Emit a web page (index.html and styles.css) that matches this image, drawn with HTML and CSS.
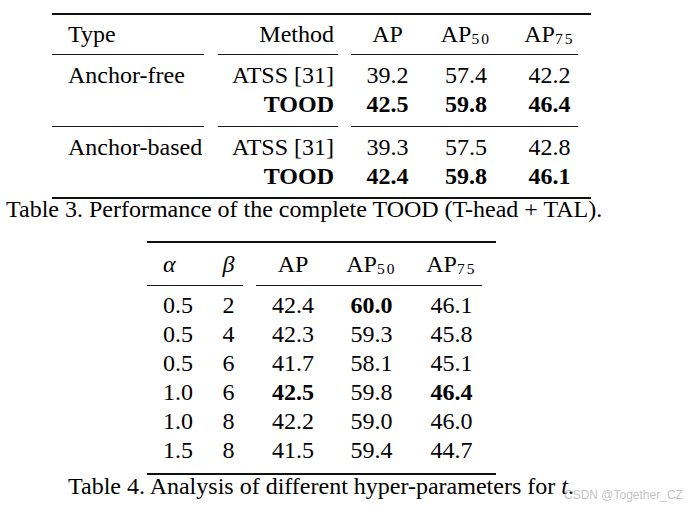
FILE: index.html
```html
<!DOCTYPE html>
<html>
<head>
<meta charset="utf-8">
<link rel="stylesheet" href="styles.css">
</head>
<body>
<div class="page">
  <div class="tbl t3">
    <div class="rule-thick rt-top3"></div>
    <div class="row head">
      <div class="c c-type">Type</div>
      <div class="c c-method">Method</div>
      <div class="c c-num">AP</div>
      <div class="c c-num c-mid">AP<span class="sub">50</span></div>
      <div class="c c-num">AP<span class="sub">75</span></div>
    </div>
    <div class="row rules r-head">
      <span class="seg s3a"></span>
      <span class="seg s3b"></span>
      <span class="seg s3c"></span>
    </div>
    <div class="row">
      <div class="c c-type">Anchor-free</div>
      <div class="c c-method">ATSS [31]</div>
      <div class="c c-num">39.2</div>
      <div class="c c-num c-mid">57.4</div>
      <div class="c c-num">42.2</div>
    </div>
    <div class="row">
      <div class="c c-type"></div>
      <div class="c c-method b">TOOD</div>
      <div class="c c-num b">42.5</div>
      <div class="c c-num c-mid b">59.8</div>
      <div class="c c-num b">46.4</div>
    </div>
    <div class="row rules r-group">
      <span class="seg s3a"></span>
      <span class="seg s3b"></span>
      <span class="seg s3c"></span>
    </div>
    <div class="row">
      <div class="c c-type">Anchor-based</div>
      <div class="c c-method">ATSS [31]</div>
      <div class="c c-num">39.3</div>
      <div class="c c-num c-mid">57.5</div>
      <div class="c c-num">42.8</div>
    </div>
    <div class="row">
      <div class="c c-type"></div>
      <div class="c c-method b">TOOD</div>
      <div class="c c-num b">42.4</div>
      <div class="c c-num c-mid b">59.8</div>
      <div class="c c-num b">46.1</div>
    </div>
    <div class="rule-thick rt-bot3"></div>
  </div>
  <p class="caption cap3">Table 3. Performance of the complete TOOD (T-head + TAL).</p>

  <div class="tbl t4">
    <div class="rule-thick rt-top4"></div>
    <div class="row head">
      <div class="c c-a"><i class="math">α</i></div>
      <div class="c c-b"><i class="math">β</i></div>
      <div class="c c-num">AP</div>
      <div class="c c-num">AP<span class="sub">50</span></div>
      <div class="c c-num">AP<span class="sub">75</span></div>
    </div>
    <div class="row rules r-head4">
      <span class="seg s4a"></span>
      <span class="seg s4b"></span>
    </div>
    <div class="row"><div class="c c-a">0.5</div><div class="c c-b">2</div><div class="c c-num">42.4</div><div class="c c-num b">60.0</div><div class="c c-num">46.1</div></div>
    <div class="row"><div class="c c-a">0.5</div><div class="c c-b">4</div><div class="c c-num">42.3</div><div class="c c-num">59.3</div><div class="c c-num">45.8</div></div>
    <div class="row"><div class="c c-a">0.5</div><div class="c c-b">6</div><div class="c c-num">41.7</div><div class="c c-num">58.1</div><div class="c c-num">45.1</div></div>
    <div class="row"><div class="c c-a">1.0</div><div class="c c-b">6</div><div class="c c-num b">42.5</div><div class="c c-num">59.8</div><div class="c c-num b">46.4</div></div>
    <div class="row"><div class="c c-a">1.0</div><div class="c c-b">8</div><div class="c c-num">42.2</div><div class="c c-num">59.0</div><div class="c c-num">46.0</div></div>
    <div class="row"><div class="c c-a">1.5</div><div class="c c-b">8</div><div class="c c-num">41.5</div><div class="c c-num">59.4</div><div class="c c-num">44.7</div></div>
    <div class="rule-thick rt-bot4"></div>
  </div>
  <p class="caption cap4">Table 4. Analysis of different hyper-parameters for <i>t</i>.</p>
  <div class="watermark">CSDN @Together_CZ</div>
</div>
</body>
</html>
```

FILE: styles.css
```css
html, body {
  margin: 0;
  padding: 0;
  background: #ffffff;
}

body {
  font-family: "Liberation Serif", "Times New Roman", serif;
  font-size: 24px;
  color: #000000;
}

.page {
  position: relative;
  width: 643px;
  height: 508px;
  padding-top: 13px;
  box-sizing: border-box;
}

.tbl {
  margin: 0 auto;
}

.t3 { width: 539px; }
.t4 { width: 349px; }

.row {
  display: grid;
  height: 29px;
  line-height: 29px;
  white-space: nowrap;
}

.t3 .row { grid-template-columns: 159px 133px 87px 77px 83px; }
.t4 .row { grid-template-columns: 60px 43px 86px 71px 89px; }

.rule-thick {
  height: 2px;
  background: #111111;
}

.rules {
  height: 1px;
}

.seg {
  display: block;
  height: 1px;
  background: #1a1a1a;
}

/* Table 3 vertical rhythm */
.t3 .head { margin-top: 5px; }
.r-head { margin-top: 5px; margin-bottom: 6px; }
.r-group { margin-top: 7px; margin-bottom: 6px; }
.rt-bot3 { margin-top: 6px; }

.s3a { grid-column: 1; margin-right: 7px; }
.s3b { grid-column: 2; margin-left: 7px; margin-right: 6px; }
.s3c { grid-column: 3 / 6; margin-left: 7px; margin-right: 13px; }

.c-type { padding-left: 16px; text-align: left; }
.c-method { text-align: right; padding-right: 10px; }
.c-num { text-align: center; }
.c-mid { padding-right: 7px; }

.b { font-weight: bold; }

.sub {
  font-size: 15.5px;
  letter-spacing: 2.2px;
  position: relative;
  top: 2px;
  line-height: 0;
}

.caption {
  margin: 0;
  white-space: nowrap;
}

.cap3 {
  line-height: 20px;
  padding-left: 6px;
}

/* Table 4 */
.rt-top4 { margin-top: 22px; }
.t4 .head { margin-top: 7px; }
.r-head4 { margin-top: 6px; margin-bottom: 5px; }
.rt-bot4 { margin-top: 8px; }

.s4a { grid-column: 1 / 3; margin-right: 7px; }
.s4b { grid-column: 3 / 6; margin-left: 6px; margin-right: 14px; }

.c-a { padding-left: 16px; text-align: left; }
.c-b { text-align: center; }

.math {
  font-style: italic;
}

.cap4 {
  line-height: 22px;
  padding-left: 68px;
}

.watermark {
  position: absolute;
  left: 564px;
  top: 488px;
  font-family: "Liberation Sans", Arial, sans-serif;
  font-size: 12px;
  line-height: 14px;
  color: rgba(160, 160, 160, 0.65);
  white-space: nowrap;
}
```
